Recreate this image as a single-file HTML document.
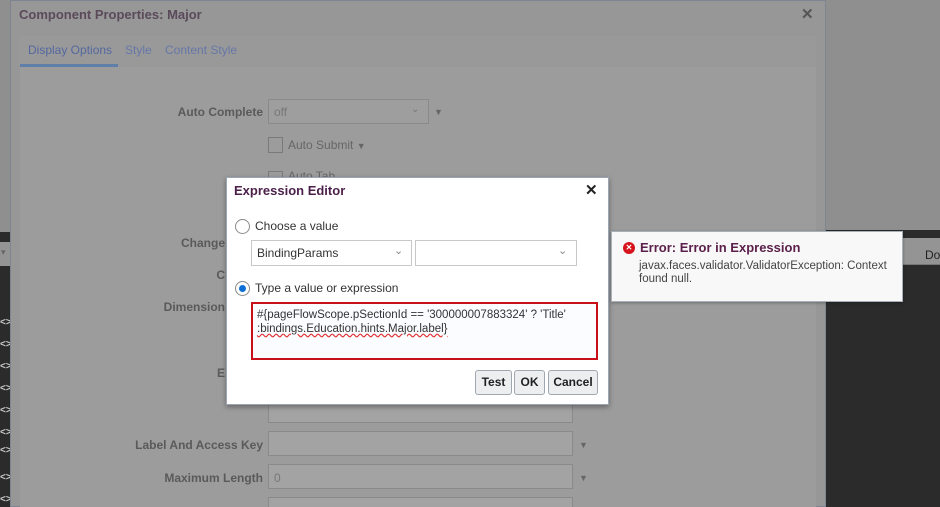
<!DOCTYPE html>
<html style="width:940px;height:507px;overflow:hidden"><head><style>
*{box-sizing:border-box;margin:0;padding:0}
body{width:940px;height:507px;overflow:hidden;position:relative;background:#2b2b2b;font-family:"Liberation Sans",sans-serif;font-size:12px}
.a{position:absolute}
.lbl{position:absolute;color:#5a5a5a;font-size:12px;font-weight:bold;text-align:right;width:200px}
.fld{position:absolute;border:1px solid #8a8a8a;background:#a3a3a3;height:25px}
.dd{position:absolute;color:#666;font-size:9px}
.ic{position:absolute;left:0;color:#ccc;font-size:10px;font-weight:bold}
</style></head><body>
<div class="a" style="left:826px;top:0;width:114px;height:230px;background:#8f8f8f"></div>
<div class="a" style="left:826px;top:238px;width:114px;height:27px;background:#949494;border-bottom:1px solid #777"></div>
<div class="a" style="left:925px;top:248px;color:#222;font-size:12px">Do</div>
<div class="a" style="left:0;top:0;width:10px;height:232px;background:#8f8f8f"></div>
<div class="a" style="left:0;top:242px;width:10px;height:24px;background:#949494"></div>
<div class="a" style="left:1px;top:247px;color:#666;font-size:9px">▾</div>
<div class="ic" style="top:317px">&lt;&gt;</div>
<div class="ic" style="top:339px">&lt;&gt;</div>
<div class="ic" style="top:361px">&lt;&gt;</div>
<div class="ic" style="top:383px">&lt;&gt;</div>
<div class="ic" style="top:405px">&lt;&gt;</div>
<div class="ic" style="top:427px">&lt;&gt;</div>
<div class="ic" style="top:445px">&lt;&gt;</div>
<div class="ic" style="top:472px">&lt;&gt;</div>
<div class="ic" style="top:494px">&lt;&gt;</div>
<div class="a" style="left:10px;top:0;width:816px;height:507px;background:#979797;border:1px solid #7d8590"></div>
<div class="a" style="left:19px;top:7px;color:#5a4a5a;font-size:13px;font-weight:bold">Component Properties: Major</div>
<div class="a" style="left:801px;top:5px;color:#555;font-size:15px;font-weight:bold">✕</div>
<div class="a" style="left:19px;top:36px;width:797px;height:31px;background:#999"></div>
<div class="a" style="left:28px;top:43px;color:#5468a0;font-size:12px">Display Options</div>
<div class="a" style="left:20px;top:64px;width:98px;height:3px;background:#5f7fa8"></div>
<div class="a" style="left:125px;top:43px;color:#6677a8;font-size:12px">Style</div>
<div class="a" style="left:165px;top:43px;color:#6677a8;font-size:12px">Content Style</div>
<div class="a" style="left:20px;top:67px;width:796px;height:440px;background:#9c9c9c"></div>
<div class="lbl" style="left:63px;top:105px">Auto Complete</div>
<div class="fld" style="left:268px;top:99px;width:161px;background:#9e9e9e"></div>
<div class="a" style="left:274px;top:105px;color:#777">off</div>
<div class="a" style="left:411px;top:104px;color:#777;font-size:10px">⌄</div>
<div class="dd" style="left:434px;top:107px">▼</div>
<div class="a" style="left:268px;top:137px;width:15px;height:16px;border:1px solid #7a7a7a"></div>
<div class="a" style="left:288px;top:138px;color:#666">Auto Submit <span style="font-size:9px">▼</span></div>
<div class="a" style="left:268px;top:171px;width:15px;height:10px;border:1px solid #7a7a7a;border-bottom:0"></div>
<div class="a" style="left:288px;top:169px;color:#666">Auto Tab</div>
<div class="lbl" style="left:25px;top:236px">Change</div>
<div class="lbl" style="left:25px;top:268px">C</div>
<div class="lbl" style="left:25px;top:300px">Dimension</div>
<div class="lbl" style="left:25px;top:366px">E</div>
<div class="lbl" style="left:63px;top:438px">Label And Access Key</div>
<div class="fld" style="left:268px;top:431px;width:305px"></div>
<div class="dd" style="left:579px;top:440px">▼</div>
<div class="lbl" style="left:63px;top:471px">Maximum Length</div>
<div class="fld" style="left:268px;top:464px;width:305px"></div>
<div class="a" style="left:274px;top:471px;color:#777">0</div>
<div class="dd" style="left:579px;top:473px">▼</div>
<div class="fld" style="left:268px;top:497px;width:305px"></div>
<div class="fld" style="left:268px;top:398px;width:305px"></div>
<div class="a" style="left:226px;top:177px;width:383px;height:228px;background:#fff;border:1px solid #9aa6b4;box-shadow:0 2px 5px rgba(0,0,0,.35)"></div>
<div class="a" style="left:234px;top:183px;color:#4a1f4a;font-size:13px;font-weight:bold">Expression Editor</div>
<div class="a" style="left:585px;top:181px;color:#222;font-size:15px;font-weight:bold">✕</div>
<div class="a" style="left:235px;top:219px;width:15px;height:15px;border:1px solid #8a8a8a;border-radius:50%"></div>
<div class="a" style="left:255px;top:219px;color:#333">Choose a value</div>
<div class="a" style="left:251px;top:240px;width:161px;height:26px;border:1px solid #c8c8c8"></div>
<div class="a" style="left:257px;top:246px;color:#333">BindingParams</div>
<div class="a" style="left:394px;top:244px;color:#888;font-size:11px">⌄</div>
<div class="a" style="left:415px;top:240px;width:162px;height:26px;border:1px solid #c8c8c8"></div>
<div class="a" style="left:558px;top:244px;color:#888;font-size:11px">⌄</div>
<div class="a" style="left:235px;top:281px;width:15px;height:15px;border:1px solid #8a8a8a;border-radius:50%"></div>
<div class="a" style="left:239px;top:285px;width:7px;height:7px;background:#0b6fd6;border-radius:50%"></div>
<div class="a" style="left:255px;top:281px;color:#333">Type a value or expression</div>
<div class="a" style="left:251px;top:302px;width:347px;height:58px;border:2px solid #c8101a;background:#fafcff"></div>
<div class="a" style="left:257px;top:308px;color:#333;font-size:11.5px;line-height:14px">#{pageFlowScope.pSectionId == '300000007883324' ? 'Title'<br><span style="text-decoration:underline wavy #e03030">:bindings.Education.hints.Major.label}</span></div>
<div class="a" style="left:475px;top:370px;width:37px;height:25px;border:1px solid #a0a7b0;border-radius:3px;background:#eceef0;text-align:center;line-height:23px;font-weight:bold;color:#222">Test</div>
<div class="a" style="left:514px;top:370px;width:31px;height:25px;border:1px solid #a0a7b0;border-radius:3px;background:#eceef0;text-align:center;line-height:23px;font-weight:bold;color:#222">OK</div>
<div class="a" style="left:548px;top:370px;width:50px;height:25px;border:1px solid #a0a7b0;border-radius:3px;background:#eceef0;text-align:center;line-height:23px;font-weight:bold;color:#222">Cancel</div>
<div class="a" style="left:611px;top:231px;width:292px;height:71px;background:#f8f8f8;border:1px solid #a8b0ba;box-shadow:0 1px 3px rgba(0,0,0,.3)"></div>
<div class="a" style="left:623px;top:242px;width:12px;height:12px;border-radius:50%;background:#d7141e;color:#fff;font-size:8px;text-align:center;line-height:12px;font-weight:bold">✕</div>
<div class="a" style="left:640px;top:240px;color:#5a1f4a;font-size:13px;font-weight:bold">Error: Error in Expression</div>
<div class="a" style="left:639px;top:260px;color:#444;font-size:11.5px;line-height:13px">javax.faces.validator.ValidatorException: Context<br>found null.</div>
</body></html>
